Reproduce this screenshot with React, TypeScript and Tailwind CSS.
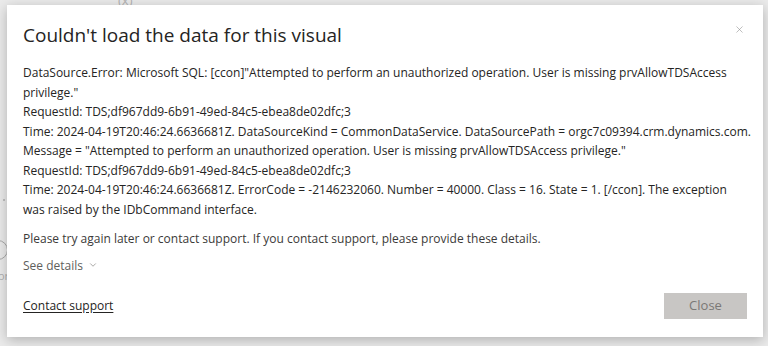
import React from 'react';
import { X, ChevronDown } from 'lucide-react';

const lines = [
  'DataSource.Error: Microsoft SQL: [ccon]"Attempted to perform an unauthorized operation. User is missing prvAllowTDSAccess',
  'privilege."',
  'RequestId: TDS;df967dd9-6b91-49ed-84c5-ebea8de02dfc;3',
  'Time: 2024-04-19T20:46:24.6636681Z. DataSourceKind = CommonDataService. DataSourcePath = orgc7c09394.crm.dynamics.com.',
  'Message = "Attempted to perform an unauthorized operation. User is missing prvAllowTDSAccess privilege."',
  'RequestId: TDS;df967dd9-6b91-49ed-84c5-ebea8de02dfc;3',
  'Time: 2024-04-19T20:46:24.6636681Z. ErrorCode = -2146232060. Number = 40000. Class = 16. State = 1. [/ccon]. The exception',
  'was raised by the IDbCommand interface.',
];

export default function App() {
  return (
    <div
      className="relative w-[768px] h-[346px] overflow-hidden bg-[#ebebeb] pt-[5px] pl-[7px]"
      style={{ fontFamily: '"Open Sans", "Noto Sans", Arial, sans-serif' }}
    >
      {/* faint report page behind the overlay */}
      <span className="absolute left-[118px] -top-[9px] text-[13px] text-[#b4b4b4]">(x)</span>
      <span className="absolute -left-[12px] top-[240px] w-[20px] h-[20px] rounded-full border border-[#a8a8a8]" />
      <span className="absolute -left-[2px] top-[268px] text-[11px] text-[#b0b0b0]">or</span>
      <span className="absolute left-[3px] top-[199px] w-[2px] h-[2px] bg-[#c0c0c0]" />

      <div className="relative w-[756px] h-[332px] bg-white shadow-[0_3px_12px_rgba(0,0,0,0.25)] px-4 pt-4 flex flex-col">
        <button className="absolute right-[18px] top-[19px] text-[#8a8a8a]">
          <X className="w-[11px] h-[11px]" strokeWidth={1.2} />
        </button>

        <h1 className="text-[19px] leading-[28px] text-[#252423] font-normal">
          Couldn't load the data for this visual
        </h1>

        <div className="mt-[14px] text-[12px] leading-[19.5px] text-[#252423] whitespace-nowrap">
          {lines.map((l, i) => (
            <div key={i}>{l}</div>
          ))}
        </div>

        <p className="mt-[10px] text-[12px] leading-[19.5px] text-[#3b3a39]">
          Please try again later or contact support. If you contact support, please provide these details.
        </p>

        <div className="mt-[7px] flex items-center gap-[5px] text-[12px] leading-[19.5px] text-[#605e5c]">
          <span>See details</span>
          <ChevronDown className="w-[10px] h-[10px]" strokeWidth={1.3} />
        </div>

        <div className="mt-[18px] flex items-center justify-between">
          <a className="text-[12px] text-[#252423] underline underline-offset-2">Contact support</a>
          <button className="w-[83px] h-[26px] bg-[#c8c6c4] text-[13px] text-[#7a7876]">Close</button>
        </div>
      </div>
    </div>
  );
}
